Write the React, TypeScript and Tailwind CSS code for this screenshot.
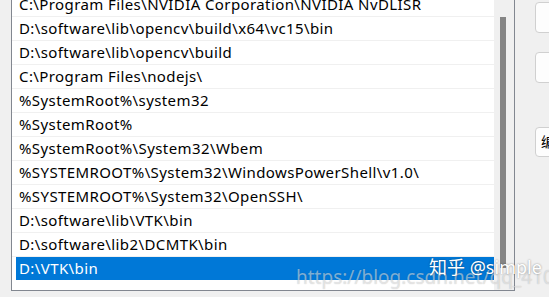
const paths = [
  "C:\\Program Files\\NVIDIA Corporation\\NVIDIA NvDLISR",
  "D:\\software\\lib\\opencv\\build\\x64\\vc15\\bin",
  "D:\\software\\lib\\opencv\\build",
  "C:\\Program Files\\nodejs\\",
  "%SystemRoot%\\system32",
  "%SystemRoot%",
  "%SystemRoot%\\System32\\Wbem",
  "%SYSTEMROOT%\\System32\\WindowsPowerShell\\v1.0\\",
  "%SYSTEMROOT%\\System32\\OpenSSH\\",
  "D:\\software\\lib\\VTK\\bin",
  "D:\\software\\lib2\\DCMTK\\bin",
];

const App = () => {
  return (
    <div
      className="relative w-[549px] h-[297px] bg-[#f0f0f0] flex overflow-hidden text-[15px] tracking-[0.4px] text-black"
      style={{ fontFamily: '"Noto Sans", "Noto Sans CJK SC", sans-serif' }}
    >
      {/* list box */}
      <div className="shrink-0 ml-[11px] w-[504px] h-[291px] border-l border-r border-b border-[#828790] bg-white flex">
        <div className="flex-1 overflow-hidden">
          <div className="-mt-[7px]">
            {paths.map((p) => (
              <div key={p} className="h-[24px] border-b border-[#f0f0f0] pl-[7px] leading-[23px] whitespace-nowrap">
                {p}
              </div>
            ))}
            <div className="h-[24px] pl-[4px]">
              <div className="h-[23px] bg-[#0078d7] text-white pl-[3px] leading-[23px]">D:\VTK\bin</div>
            </div>
          </div>
        </div>
        <div className="shrink-0 w-[20px] bg-[#f0f0f0] pl-[6px] pt-[17px]">
          <div className="w-[6px] h-[251px] bg-[#858585]" />
        </div>
      </div>

      {/* side buttons */}
      <div className="shrink-0 ml-[20px] flex flex-col">
        <div className="mt-[2px] w-[40px] h-[31px] bg-[#fdfdfd] border border-[#d0d0d0] rounded-[4px]" />
        <div className="mt-[19px] w-[40px] h-[31px] bg-[#fdfdfd] border border-[#d0d0d0] rounded-[4px]" />
        <div className="mt-[44px] w-[40px] h-[30px] bg-[#fdfdfd] border border-[#d0d0d0] rounded-[4px] pl-[5px] leading-[28px] text-[14px] tracking-normal whitespace-nowrap overflow-hidden">
          编辑
        </div>
      </div>

      {/* watermarks */}
      <div className="absolute left-[296px] top-[266px] text-[19px] leading-[22px] tracking-normal text-white/50 [text-shadow:0_0_1px_rgba(0,0,0,0.25)] whitespace-nowrap">
        https://blog.csdn.net/qq_41029325
      </div>
      <div className="absolute left-[429px] top-[256px] text-[18px] leading-[22px] tracking-normal text-white [text-shadow:0_0_2px_rgba(0,0,0,0.45)] whitespace-nowrap">
        知乎 @simple
      </div>
    </div>
  );
};

export default App;
